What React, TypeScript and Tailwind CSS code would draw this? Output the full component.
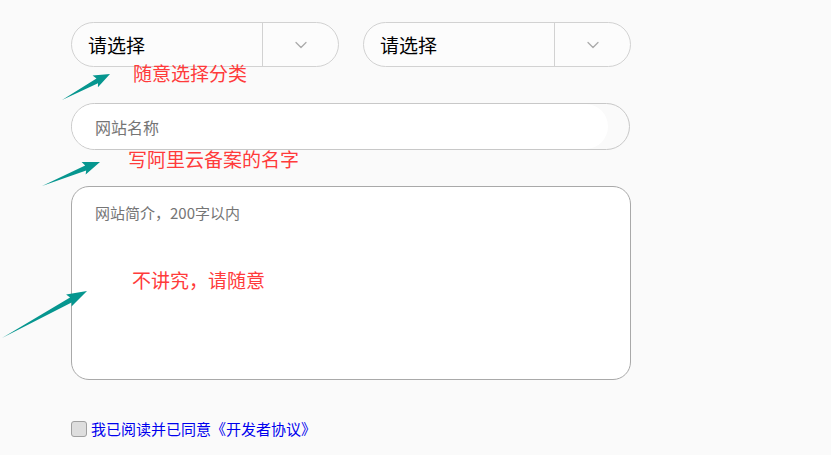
import { ChevronDown } from 'lucide-react';

const cjk = { fontFamily: '"Noto Sans CJK SC", "Liberation Sans", sans-serif' };

type ArrowProps = { x1: number; y1: number; x2: number; y2: number; head?: number };

// teal pointer arrows drawn over the form
function Arrow({ x1, y1, x2, y2, head = 16 }: ArrowProps) {
  const len = Math.hypot(x2 - x1, y2 - y1);
  const deg = (Math.atan2(y2 - y1, x2 - x1) * 180) / Math.PI;
  const pts = [
    [0, 0],
    [len - head + 2, -2.5],
    [len - head, -7],
    [len, 0],
    [len - head - 1, 6],
    [len - head + 1, 2.5],
  ]
    .map((p) => p.join(','))
    .join(' ');
  return (
    <g transform={`translate(${x1} ${y1}) rotate(${deg})`}>
      <polygon points={pts} fill="#06968f" />
    </g>
  );
}

function Select() {
  return (
    <div className="flex h-[45px] w-[268px] items-stretch rounded-full border border-[#d2d2d2] bg-[#fcfcfc]">
      <div className="flex w-[191px] items-center border-r border-[#d2d2d2] pl-4 pt-[1px] text-[19px] text-black">
        请选择
      </div>
      <div className="flex flex-1 items-center justify-center">
        <ChevronDown className="h-5 w-5 text-[#aaa]" strokeWidth={1.5} />
      </div>
    </div>
  );
}

export default function App() {
  return (
    <div className="relative h-[455px] w-[831px] overflow-hidden bg-[#fafafa]" style={cjk}>
      <div className="flex flex-col pl-[71px] pt-[22px]">
        <div className="flex gap-6">
          <Select />
          <Select />
        </div>

        <div className="mt-[36px] h-[47px] w-[559px] rounded-full border border-[#c8c8c8]">
          <div className="flex h-full w-[536px] items-center rounded-full bg-white pl-[23px] text-[16px] text-[#757575]">
            网站名称
          </div>
        </div>

        <div className="mt-[36px] h-[194px] w-[560px] rounded-[18px] border border-[#a9a9a9] bg-white px-[23px] pt-[15px] text-[15px] text-[#757575]">
          网站简介，200字以内
        </div>

        <label className="mt-[38px] flex items-center text-[15px] text-[#0000ee]">
          <span className="mr-[4px] h-[16px] w-[16px] rounded-[3px] border border-[#a0a0a0] bg-[#dedede]" />
          我已阅读并已同意《开发者协议》
        </label>
      </div>

      {/* notes */}
      <div className="absolute left-[133px] top-[59px] text-[19px] text-[#ff3b3b]">随意选择分类</div>
      <div className="absolute left-[128px] top-[145px] text-[19px] text-[#ff3b3b]">写阿里云备案的名字</div>
      <div className="absolute left-[132px] top-[266px] text-[19px] text-[#ff3b3b]">不讲究，请随意</div>

      <svg className="pointer-events-none absolute inset-0" width="831" height="455">
        <Arrow x1={62} y1={100} x2={110} y2={74} head={16} />
        <Arrow x1={42} y1={186} x2={100} y2={162} head={17} />
        <Arrow x1={2} y1={338} x2={87} y2={291} head={20} />
      </svg>
    </div>
  );
}
